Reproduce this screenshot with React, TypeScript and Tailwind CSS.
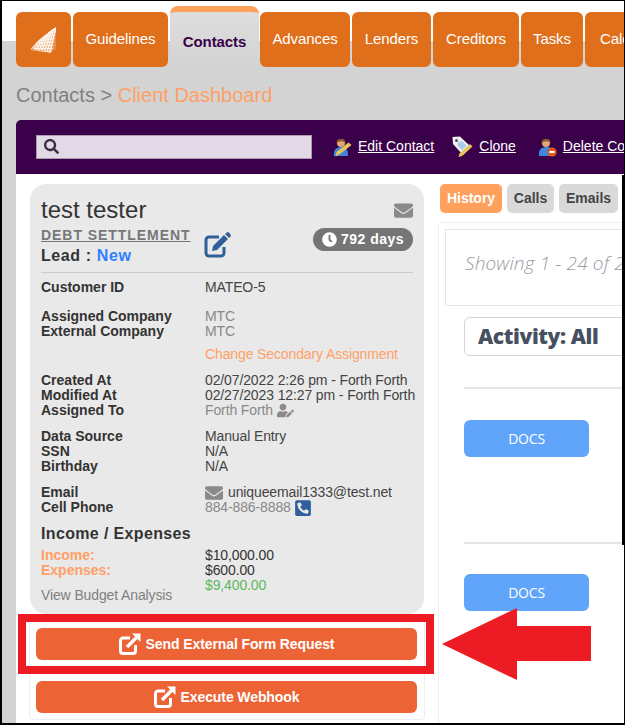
import React from "react";
import { FaSearch, FaEnvelope, FaClock, FaUserEdit, FaPhoneSquareAlt } from "react-icons/fa";

const tabs: [string, string][] = [
  ["Guidelines", "w-[95px]"],
  ["Advances", "w-[90px]"],
  ["Lenders", "w-[79px]"],
  ["Creditors", "w-[86px]"],
  ["Tasks", "w-[62px]"],
  ["Calendar", "w-[90px]"],
];

function Tab({ label, w }: { label: string; w: string }) {
  return (
    <div className={`${w} h-[55px] shrink-0 rounded-[6px] bg-[#e06f1b] text-white text-[15px] tracking-[-0.1px] flex items-center justify-center`}>
      {label}
    </div>
  );
}

function Logo() {
  const lines: React.ReactNode[] = [];
  for (let i = 0; i <= 7; i++) {
    const t = i / 7;
    lines.push(
      <line key={`a${i}`} x1={1 + 19 * t} y1={22 + 3 * t} x2={10 + 16 * t} y2={12 - 12 * t} stroke="#fff" strokeWidth="1.5" />
    );
    lines.push(
      <line key={`b${i}`} x1={2 + 16 * t} y1={24 - 18 * t} x2={22 + 4 * t} y2={25 - 24 * t} stroke="#fff" strokeWidth="1.5" />
    );
  }
  return (
    <svg width="27" height="26" viewBox="0 0 27 26">
      <defs>
        <clipPath id="logo-clip">
          <path d="M0 23 C7 14 17 5 26 0 L26 22 L20 26 C13 24 6 24 0 23 Z" />
        </clipPath>
      </defs>
      <g clipPath="url(#logo-clip)" opacity="0.92">
        <rect width="27" height="26" fill="#f2b98a" opacity="0.45" />
        {lines}
      </g>
    </svg>
  );
}

function EditIcon() {
  return (
    <svg width="27" height="26" viewBox="0 0 27 26" fill="none">
      <path d="M15 5 H5 a3 3 0 0 0 -3 3 V21 a3 3 0 0 0 3 3 H17 a3 3 0 0 0 3 -3 V15" stroke="#2f6099" strokeWidth="3" />
      <path d="M9 14 L20 3 L24 7 L13 18 L8 19 Z" fill="#2f6099" />
      <path d="M21 2 L23 0.5 a1.5 1.5 0 0 1 2 0 L26.5 2.5 a1.5 1.5 0 0 1 0 2 L25 6 Z" fill="#2f6099" />
    </svg>
  );
}

function PersonIcon({ kind }: { kind: "edit" | "del" }) {
  return (
    <svg width="20" height="20" viewBox="0 0 20 20">
      <path d="M2 19 C1 12 5 10 10 10 C14 10 16 12 16 19 Z" fill="#3f86dc" />
      <circle cx="9" cy="6" r="4" fill="#e0a878" />
      <path d="M4.5 6 C4 0.5 14 0.5 13.5 6 C11 3.5 8 3.5 4.5 6 Z" fill="#8a5526" />
      {kind === "edit" ? (
        <path d="M19.5 8 L8 17 L3.5 19.5 L4.5 15 L16.5 5.5 Z" fill="#e6c65a" />
      ) : (
        <>
          <circle cx="15" cy="15" r="4.6" fill="#e2571c" />
          <rect x="12.4" y="14" width="5.2" height="2" fill="#fff" />
        </>
      )}
    </svg>
  );
}

function TagIcon() {
  return (
    <svg width="22" height="22" viewBox="0 0 22 22">
      <path d="M0.5 1 L8 0.5 L19 11 L11 19 L1 8 Z" fill="#f0f2f4" />
      <circle cx="4.5" cy="4.5" r="1.5" fill="#5a4a60" />
      <path d="M6 6 L10 5 L14.5 10 L10 14 L5.5 9.5 Z" fill="#a9cdee" />
      <path d="M20.5 10.5 L10 20 L6.5 21 L7.5 17.5 L18 8 Z" fill="#e6c65a" />
    </svg>
  );
}

function Row({ label, children, mt }: { label: string; children: React.ReactNode; mt?: string }) {
  return (
    <div className={`flex h-[15px] items-center ${mt ?? ""}`}>
      <div className="w-[164px] shrink-0 font-bold text-[#333]">{label}</div>
      <div className="whitespace-nowrap flex items-center tracking-[-0.12px]">{children}</div>
    </div>
  );
}

function ExtIcon() {
  return (
    <svg width="22" height="22" viewBox="0 0 22 22" fill="none" stroke="#fff">
      <path d="M11 5 H4 a2.5 2.5 0 0 0 -2.5 2.5 V18 a2.5 2.5 0 0 0 2.5 2.5 H14 a2.5 2.5 0 0 0 2.5 -2.5 V12" strokeWidth="3" />
      <path d="M8 14 L18 4" strokeWidth="3.4" />
      <path d="M13 0.5 H21.5 V9 Z" fill="#fff" stroke="none" />
    </svg>
  );
}

function ActionButton({ label }: { label: string }) {
  return (
    <div className="h-[32px] rounded-[6px] bg-[#ec6336] text-white font-bold text-[14px] tracking-[-0.1px] flex items-center justify-center gap-[5px]">
      <ExtIcon />
      <span>{label}</span>
    </div>
  );
}

export default function App() {
  return (
    <div className="relative w-[625px] h-[725px] overflow-hidden bg-[linear-gradient(#fff_41px,#d3d3d3_41px)] font-['Liberation_Sans',Arial,sans-serif] text-[14px]">
      <div className="flex items-end gap-[2px] pl-[16px] h-[67px] w-[800px]">
        <div className="w-[55px] h-[55px] shrink-0 rounded-[6px] bg-[#e06f1b] flex items-center justify-center">
          <Logo />
        </div>
        <Tab label="Guidelines" w={tabs[0][1]} />
        <div className="w-[89px] h-[61px] shrink-0 rounded-t-[8px] border-t-[6px] border-[#ffa05c] bg-[linear-gradient(#dedede,#d3d3d3)] text-[#3a004a] font-bold text-[15px] tracking-[-0.1px] flex items-center justify-center pt-[6px] -mr-[1px]">
          Contacts
        </div>
        {tabs.slice(1).map(([l, w], i) => (
          <Tab key={i} label={l} w={w} />
        ))}
      </div>

      <div className="pl-[16px] mt-[16px] h-[37px] text-[20px] leading-[24px] text-[#808080] whitespace-nowrap">
        Contacts &gt; <span className="text-[#ffa066]">Client Dashboard</span>
      </div>

      <div className="ml-[16px] w-[620px] h-[54px] rounded-t-[5px] bg-[#3a004a] flex items-center pl-[20px] pb-[1px] whitespace-nowrap text-white">
        <div className="w-[276px] h-[24px] bg-[#e3d9e6] border border-[#a99aae] flex items-center pl-[7px] shrink-0">
          <FaSearch className="text-[#3c3040] text-[15px]" />
        </div>
        <span className="ml-[20px] mr-[6px]"><PersonIcon kind="edit" /></span>
        <span className="underline">Edit Contact</span>
        <span className="ml-[18px] mr-[5px]"><TagIcon /></span>
        <span className="underline">Clone</span>
        <span className="ml-[21px] mr-[6px]"><PersonIcon kind="del" /></span>
        <span className="underline">Delete Contact</span>
      </div>

      <div className="ml-[16px] w-[620px] h-[551px] bg-white flex">
        <div className="w-[423px] shrink-0 pl-[14px] pt-[10px]">
          <div className="w-[394px] h-[430px] rounded-[16px] bg-[#e9e9e9] pl-[11px] pr-[11px] pt-[12px] text-[#444]">
            <div className="flex items-start justify-between">
              <div className="text-[24px] leading-[28px] text-[#333]">test tester</div>
              <FaEnvelope className="text-[#8a8a8a] text-[19px] mt-[5px]" />
            </div>
            <div className="flex justify-between h-[43px] mt-[4px]">
              <div className="flex items-start">
                <div>
                  <div className="font-bold text-[14px] leading-[15px] tracking-[0.95px] text-[#777] underline whitespace-nowrap">DEBT SETTLEMENT</div>
                  <div className="font-bold text-[16px] leading-[18px] tracking-[0.6px] mt-[4px] text-[#333]">
                    Lead : <span className="text-[#2f80ff]">New</span>
                  </div>
                </div>
                <span className="ml-[13px] mt-[4px]"><EditIcon /></span>
              </div>
              <div className="h-[23px] w-[100px] rounded-full bg-[#757575] text-white font-bold text-[14px] tracking-[0.5px] flex items-center justify-center gap-[4px]">
                <FaClock className="text-[15px]" /> 792 days
              </div>
            </div>
            <div className="border-t border-[#ccc] mt-[1px]" />
            <Row label="Customer ID" mt="mt-[7px]"><span className="text-[#444]">MATEO-5</span></Row>
            <Row label="Assigned Company" mt="mt-[14px]"><span className="text-[#888]">MTC</span></Row>
            <Row label="External Company"><span className="text-[#888]">MTC</span></Row>
            <div className="pl-[164px] mt-[8px] h-[15px] leading-[15px] tracking-[-0.12px] text-[#ffa066] whitespace-nowrap">Change Secondary Assignment</div>
            <Row label="Created At" mt="mt-[11px]">02/07/2022 2:26 pm - Forth Forth</Row>
            <Row label="Modified At">02/27/2023 12:27 pm - Forth Forth</Row>
            <Row label="Assigned To">
              <span className="text-[#888]">Forth Forth</span>
              <FaUserEdit className="text-[#8a8a8a] text-[17px] ml-[4px]" />
            </Row>
            <Row label="Data Source" mt="mt-[11px]">Manual Entry</Row>
            <Row label="SSN">N/A</Row>
            <Row label="Birthday">N/A</Row>
            <Row label="Email" mt="mt-[11px]">
              <FaEnvelope className="text-[#8a8a8a] text-[18px] mr-[5px]" />
              uniqueemail1333@test.net
            </Row>
            <Row label="Cell Phone">
              <span className="text-[#888]">884-886-8888</span>
              <FaPhoneSquareAlt className="text-[#2f6099] text-[18px] ml-[3px]" />
            </Row>
            <div className="font-bold text-[16px] leading-[18px] tracking-[0.35px] text-[#333] mt-[10px]">Income / Expenses</div>
            <div className="flex mt-[5px]">
              <div className="w-[164px] shrink-0">
                <div className="h-[15px] leading-[15px] font-bold text-[#ffa066]">Income:</div>
                <div className="h-[15px] leading-[15px] font-bold text-[#ffa066]">Expenses:</div>
                <div className="h-[15px] leading-[15px] tracking-[-0.12px] text-[#808080] mt-[10px]">View Budget Analysis</div>
              </div>
              <div className="text-[#333] tracking-[-0.12px]">
                <div className="h-[15px] leading-[15px]">$10,000.00</div>
                <div className="h-[15px] leading-[15px]">$600.00</div>
                <div className="h-[15px] leading-[15px] text-[#5cb85c]">$9,400.00</div>
              </div>
            </div>
          </div>
          <div className="w-[396px] -ml-[1px] h-[105px] mt-[1px] border border-[#eee] rounded-[4px] pl-[6px] pr-[7px] pt-[12px] flex flex-col gap-[21px]">
            <ActionButton label="Send External Form Request" />
            <ActionButton label="Execute Webhook" />
          </div>
        </div>

        <div className="flex-1 pt-[10px] pl-[1px]">
          <div className="flex gap-[5px] font-bold text-[14px] text-[#444]">
            <div className="w-[62px] h-[29px] rounded-[5px] bg-[#ffa05c] text-white flex items-center justify-center">History</div>
            <div className="w-[47px] h-[29px] rounded-[5px] bg-[#d9d9d9] flex items-center justify-center">Calls</div>
            <div className="w-[59px] h-[29px] rounded-[5px] bg-[#d9d9d9] flex items-center justify-center">Emails</div>
          </div>
          <div className="mt-[9px] -ml-[2px] h-[503px] border border-[#eee] rounded-[4px] pl-[6px] pt-[6px] font-['Open_Sans',sans-serif]">
            <div className="h-[77px] border border-[#e6e6e6] pl-[19px] pt-[21px] text-[19px] leading-[24px] tracking-[0.15px] italic font-light text-[#9a9aa5] whitespace-nowrap overflow-hidden">
              Showing 1 - 24 of 24
            </div>
            <div className="pl-[19px] pt-[11px]">
              <div className="w-[300px] h-[39px] rounded-[6px] border border-[#d3d3dc] pl-[13px] flex items-center text-[21px] font-extrabold tracking-[-0.4px] text-[#465060]">
                Activity: All
              </div>
              <div className="h-[2px] w-[300px] bg-[#e4e4ea] mt-[31px]" />
              <div className="w-[125px] h-[37px] mt-[31px] rounded-[6px] bg-[#60a5fa] text-white text-[14px] font-medium tracking-[-0.2px] flex items-center justify-center">DOCS</div>
              <div className="h-[2px] w-[300px] bg-[#e4e4ea] mt-[85px]" />
              <div className="w-[125px] h-[37px] mt-[30px] rounded-[6px] bg-[#60a5fa] text-white text-[14px] font-medium tracking-[-0.2px] flex items-center justify-center">DOCS</div>
            </div>
          </div>
        </div>
      </div>

      {/* annotation overlays */}
      <div className="absolute left-[18px] top-[614px] w-[416px] h-[60px] border-[8px] border-[#ed1c24]" />
      <svg className="absolute left-[442px] top-[608px]" width="150" height="72" viewBox="0 0 150 72">
        <path d="M0 36 L75 0 V18 H149 V53 H75 V72 Z" fill="#ed1c24" />
      </svg>
      {/* screenshot frame */}
      <div className="absolute inset-0 border-l-2 border-t border-b-2 border-r border-black pointer-events-none" />
      <div className="absolute right-0 top-[175px] w-[3px] h-[370px] bg-black" />
    </div>
  );
}
